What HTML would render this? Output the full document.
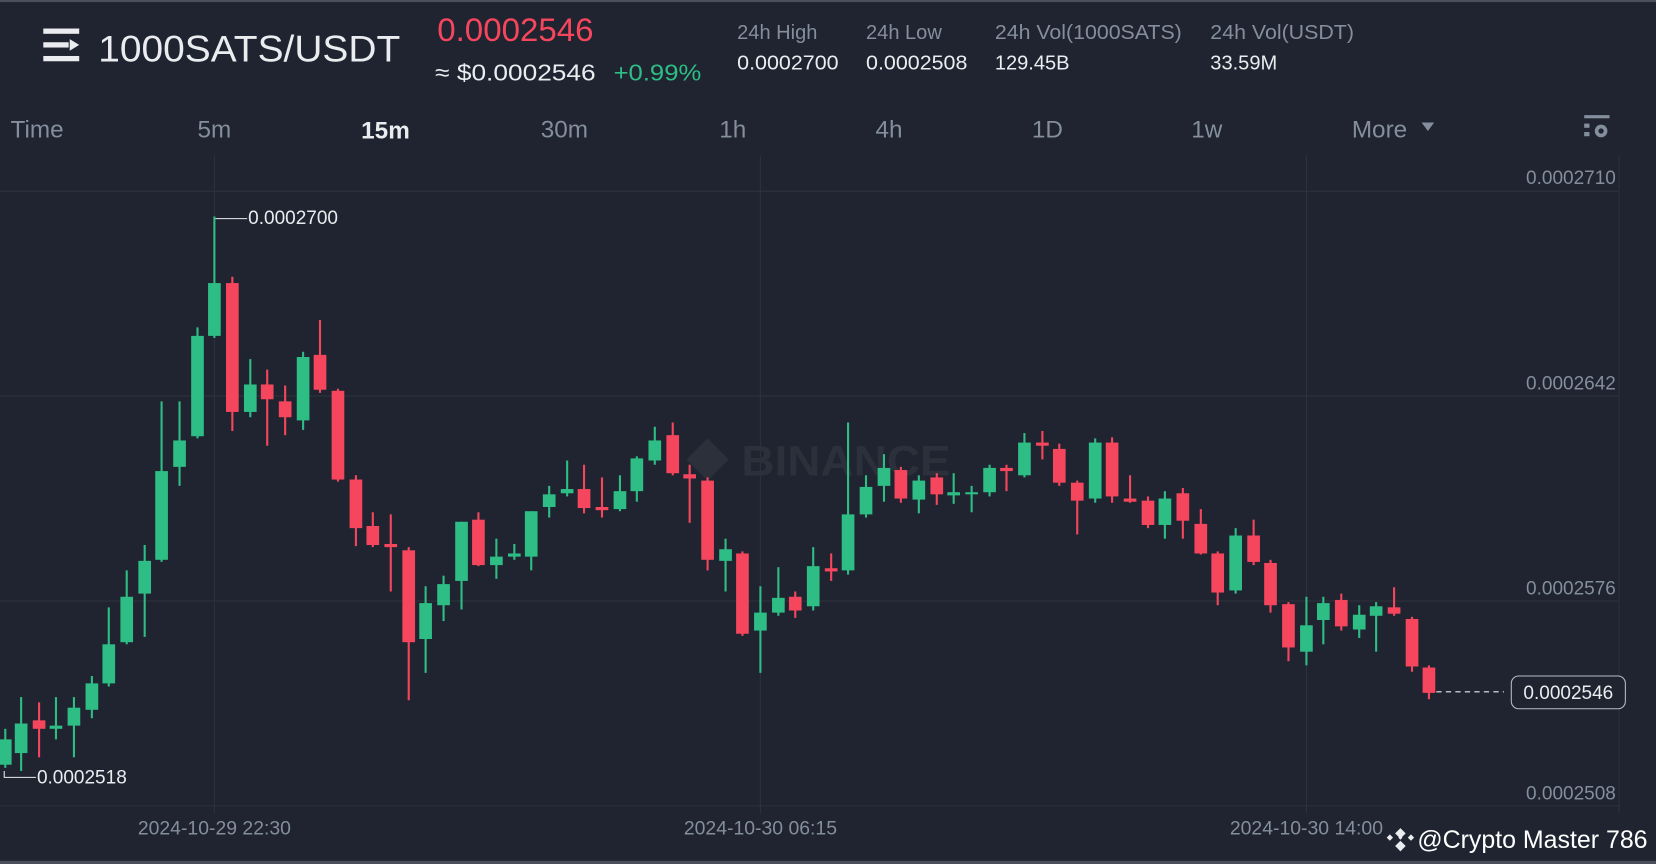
<!DOCTYPE html>
<html><head><meta charset="utf-8"><style>
html,body{margin:0;padding:0;background:#1f2430;}
svg{display:block}
text{font-family:"Liberation Sans",sans-serif}
</style></head><body>
<svg width="1656" height="864" viewBox="0 0 1568 818" preserveAspectRatio="none" xmlns="http://www.w3.org/2000/svg">
<rect width="1568" height="818" fill="#1f2430"/>
<rect width="1568" height="2" fill="#4a4f5a"/>
<rect y="815" width="1568" height="3" fill="#4a4f5a"/>
<!-- header -->
<g fill="#eaecef"><rect x="41" y="27" width="34" height="5"/><rect x="41" y="40" width="24" height="5"/><polygon points="66,37 75,42.5 66,48"/><rect x="41" y="53" width="34" height="5"/></g>
<text x="93" y="58" font-size="35" fill="#eaecef" textLength="286" lengthAdjust="spacingAndGlyphs">1000SATS/USDT</text>
<text x="414" y="39" font-size="31" fill="#f6465d" textLength="148" lengthAdjust="spacingAndGlyphs">0.0002546</text>
<text x="412" y="76" font-size="22" fill="#eaecef" textLength="152" lengthAdjust="spacingAndGlyphs">≈ $0.0002546</text>
<text x="581" y="76" font-size="22" fill="#2ebd85" textLength="83" lengthAdjust="spacingAndGlyphs">+0.99%</text>
<g font-size="19" fill="#848e9c"><text x="698" y="37">24h High</text><text x="820" y="37">24h Low</text><text x="942" y="37" textLength="177" lengthAdjust="spacingAndGlyphs">24h Vol(1000SATS)</text><text x="1146" y="37" textLength="136" lengthAdjust="spacingAndGlyphs">24h Vol(USDT)</text></g>
<g font-size="19" fill="#eaecef"><text x="698" y="66" textLength="96" lengthAdjust="spacingAndGlyphs">0.0002700</text><text x="820" y="66" textLength="96" lengthAdjust="spacingAndGlyphs">0.0002508</text><text x="942" y="66">129.45B</text><text x="1146" y="66">33.59M</text></g>
<g font-size="23" fill="#848e9c"><text x="10" y="130">Time</text><text x="187" y="130">5m</text><text x="512" y="130">30m</text><text x="681" y="130">1h</text><text x="829" y="130">4h</text><text x="977" y="130">1D</text><text x="1128" y="130">1w</text><text x="1280" y="130">More</text></g>
<text x="342" y="131" font-size="23" fill="#eaecef" font-weight="bold">15m</text>
<polygon points="1346,116 1358,116 1352,124" fill="#848e9c"/>
<g fill="#848e9c"><rect x="1500" y="109" width="24" height="3"/><rect x="1500" y="117" width="5" height="4"/><rect x="1500" y="125" width="5" height="4"/><circle cx="1516" cy="124" r="6"/><circle cx="1516" cy="124" r="2.5" fill="#1f2430"/></g>
<!-- grid -->
<g stroke="#2d323d" stroke-width="1"><line x1="0" y1="181" x2="1533" y2="181"/><line x1="0" y1="375" x2="1533" y2="375"/><line x1="0" y1="569" x2="1533" y2="569"/><line x1="0" y1="763" x2="1533" y2="763"/><line x1="203" y1="147" x2="203" y2="770"/><line x1="720" y1="147" x2="720" y2="770"/><line x1="1237" y1="147" x2="1237" y2="770"/><line x1="1533" y1="147" x2="1533" y2="770"/></g>
<!-- watermark -->
<g fill="#2b303b"><polygon points="670,415 690,435 670,455 650,435"/><text x="702" y="450" font-size="40" font-weight="bold" fill="#2b303b" textLength="198" lengthAdjust="spacingAndGlyphs">BINANCE</text></g>
<!-- axis labels -->
<g font-size="18" fill="#848e9c"><text x="1530" y="174" text-anchor="end">0.0002710</text><text x="1530" y="369" text-anchor="end">0.0002642</text><text x="1530" y="563" text-anchor="end">0.0002576</text><text x="1530" y="757" text-anchor="end">0.0002508</text>
<text x="203" y="790" text-anchor="middle" textLength="145" lengthAdjust="spacingAndGlyphs">2024-10-29 22:30</text><text x="720" y="790" text-anchor="middle" textLength="145" lengthAdjust="spacingAndGlyphs">2024-10-30 06:15</text><text x="1237" y="790" text-anchor="middle" textLength="145" lengthAdjust="spacingAndGlyphs">2024-10-30 14:00</text></g>
<!-- hi/lo markers -->
<g stroke="#eaecef" stroke-width="1" fill="none"><polyline points="203,212 203,207 234,207"/><polyline points="4,730 4,736 34,736"/></g>
<text x="235" y="212" font-size="18" fill="#eaecef">0.0002700</text>
<text x="35" y="742" font-size="18" fill="#eaecef">0.0002518</text>
<line x1="1360" y1="655" x2="1424" y2="655" stroke="#eaecef" stroke-dasharray="5,4"/>
<rect x="1431" y="640" width="108" height="31" rx="7" fill="#1f2430" stroke="#b7bdc6"/>
<text x="1485" y="662" font-size="18" fill="#eaecef" text-anchor="middle">0.0002546</text>
<!-- signature -->
<g fill="#eaecef"><polygon points="1326,784 1331,789 1326,794 1321,789"/><polygon points="1326,796 1331,801 1326,806 1321,801"/><polygon points="1316,790 1319,793 1316,796 1313,793"/><polygon points="1336,790 1339,793 1336,796 1333,793"/><polygon points="1326,791 1328,793 1326,795 1324,793"/></g>
<text x="1342" y="803" font-size="24" fill="#ffffff" textLength="218" lengthAdjust="spacingAndGlyphs">@Crypto Master 786</text>
<!-- green candles -->
<g fill="#2ebd85" stroke="#2ebd85" stroke-width="2">
<line x1="5" y1="690" x2="5" y2="727"/><rect x="-1" y="700" width="12" height="24" stroke="none"/>
<line x1="20" y1="660" x2="20" y2="730"/><rect x="14" y="685" width="12" height="28" stroke="none"/>
<line x1="53" y1="660" x2="53" y2="700"/><rect x="47" y="687" width="12" height="3" stroke="none"/>
<line x1="70" y1="660" x2="70" y2="717"/><rect x="64" y="670" width="12" height="17" stroke="none"/>
<line x1="87" y1="640" x2="87" y2="680"/><rect x="81" y="647" width="12" height="25" stroke="none"/>
<line x1="103" y1="575" x2="103" y2="650"/><rect x="97" y="610" width="12" height="37" stroke="none"/>
<line x1="120" y1="540" x2="120" y2="610"/><rect x="114" y="565" width="12" height="43" stroke="none"/>
<line x1="137" y1="516" x2="137" y2="603"/><rect x="131" y="531" width="12" height="31" stroke="none"/>
<line x1="153" y1="380" x2="153" y2="532"/><rect x="147" y="446" width="12" height="84" stroke="none"/>
<line x1="170" y1="380" x2="170" y2="460"/><rect x="164" y="417" width="12" height="25" stroke="none"/>
<line x1="187" y1="310" x2="187" y2="415"/><rect x="181" y="318" width="12" height="95" stroke="none"/>
<line x1="203" y1="205" x2="203" y2="320"/><rect x="197" y="268" width="12" height="50" stroke="none"/>
<line x1="237" y1="340" x2="237" y2="395"/><rect x="231" y="364" width="12" height="26" stroke="none"/>
<line x1="287" y1="333" x2="287" y2="407"/><rect x="281" y="338" width="12" height="60" stroke="none"/>
<line x1="403" y1="555" x2="403" y2="637"/><rect x="397" y="571" width="12" height="34" stroke="none"/>
<line x1="420" y1="545" x2="420" y2="588"/><rect x="414" y="553" width="12" height="20" stroke="none"/>
<line x1="437" y1="494" x2="437" y2="577"/><rect x="431" y="494" width="12" height="56" stroke="none"/>
<line x1="470" y1="510" x2="470" y2="548"/><rect x="464" y="527" width="12" height="8" stroke="none"/>
<line x1="487" y1="515" x2="487" y2="530"/><rect x="481" y="524" width="12" height="3" stroke="none"/>
<line x1="503" y1="484" x2="503" y2="540"/><rect x="497" y="484" width="12" height="43" stroke="none"/>
<line x1="520" y1="460" x2="520" y2="490"/><rect x="514" y="468" width="12" height="12" stroke="none"/>
<line x1="537" y1="436" x2="537" y2="470"/><rect x="531" y="463" width="12" height="4" stroke="none"/>
<line x1="587" y1="450" x2="587" y2="484"/><rect x="581" y="465" width="12" height="17" stroke="none"/>
<line x1="603" y1="432" x2="603" y2="475"/><rect x="597" y="434" width="12" height="31" stroke="none"/>
<line x1="620" y1="404" x2="620" y2="440"/><rect x="614" y="417" width="12" height="19" stroke="none"/>
<line x1="687" y1="510" x2="687" y2="560"/><rect x="681" y="520" width="12" height="11" stroke="none"/>
<line x1="720" y1="555" x2="720" y2="637"/><rect x="714" y="580" width="12" height="17" stroke="none"/>
<line x1="737" y1="537" x2="737" y2="583"/><rect x="731" y="566" width="12" height="14" stroke="none"/>
<line x1="770" y1="518" x2="770" y2="578"/><rect x="764" y="536" width="12" height="38" stroke="none"/>
<line x1="803" y1="400" x2="803" y2="544"/><rect x="797" y="487" width="12" height="53" stroke="none"/>
<line x1="820" y1="450" x2="820" y2="490"/><rect x="814" y="461" width="12" height="26" stroke="none"/>
<line x1="837" y1="430" x2="837" y2="475"/><rect x="831" y="443" width="12" height="17" stroke="none"/>
<line x1="870" y1="450" x2="870" y2="486"/><rect x="864" y="455" width="12" height="18" stroke="none"/>
<line x1="903" y1="448" x2="903" y2="477"/><rect x="897" y="466" width="12" height="3" stroke="none"/>
<line x1="920" y1="460" x2="920" y2="485"/><rect x="914" y="466" width="12" height="2" stroke="none"/>
<line x1="937" y1="440" x2="937" y2="470"/><rect x="931" y="443" width="12" height="23" stroke="none"/>
<line x1="970" y1="410" x2="970" y2="452"/><rect x="964" y="419" width="12" height="31" stroke="none"/>
<line x1="1037" y1="415" x2="1037" y2="476"/><rect x="1031" y="419" width="12" height="53" stroke="none"/>
<line x1="1103" y1="465" x2="1103" y2="510"/><rect x="1097" y="472" width="12" height="25" stroke="none"/>
<line x1="1170" y1="500" x2="1170" y2="562"/><rect x="1164" y="507" width="12" height="52" stroke="none"/>
<line x1="1237" y1="565" x2="1237" y2="630"/><rect x="1231" y="592" width="12" height="25" stroke="none"/>
<line x1="1253" y1="565" x2="1253" y2="610"/><rect x="1247" y="571" width="12" height="16" stroke="none"/>
<line x1="1287" y1="573" x2="1287" y2="604"/><rect x="1281" y="582" width="12" height="14" stroke="none"/>
<line x1="1303" y1="570" x2="1303" y2="617"/><rect x="1297" y="574" width="12" height="9" stroke="none"/>
</g>
<!-- red candles -->
<g fill="#f6465d" stroke="#f6465d" stroke-width="2">
<line x1="37" y1="665" x2="37" y2="717"/><rect x="31" y="682" width="12" height="8" stroke="none"/>
<line x1="220" y1="262" x2="220" y2="408"/><rect x="214" y="268" width="12" height="122" stroke="none"/>
<line x1="253" y1="350" x2="253" y2="422"/><rect x="247" y="364" width="12" height="14" stroke="none"/>
<line x1="270" y1="365" x2="270" y2="412"/><rect x="264" y="380" width="12" height="15" stroke="none"/>
<line x1="303" y1="303" x2="303" y2="372"/><rect x="297" y="336" width="12" height="33" stroke="none"/>
<line x1="320" y1="368" x2="320" y2="456"/><rect x="314" y="370" width="12" height="84" stroke="none"/>
<line x1="337" y1="450" x2="337" y2="517"/><rect x="331" y="454" width="12" height="46" stroke="none"/>
<line x1="353" y1="485" x2="353" y2="518"/><rect x="347" y="498" width="12" height="18" stroke="none"/>
<line x1="370" y1="487" x2="370" y2="560"/><rect x="364" y="515" width="12" height="3" stroke="none"/>
<line x1="387" y1="518" x2="387" y2="663"/><rect x="381" y="521" width="12" height="87" stroke="none"/>
<line x1="453" y1="485" x2="453" y2="536"/><rect x="447" y="492" width="12" height="43" stroke="none"/>
<line x1="553" y1="440" x2="553" y2="486"/><rect x="547" y="463" width="12" height="18" stroke="none"/>
<line x1="570" y1="452" x2="570" y2="490"/><rect x="564" y="480" width="12" height="3" stroke="none"/>
<line x1="637" y1="400" x2="637" y2="450"/><rect x="631" y="412" width="12" height="36" stroke="none"/>
<line x1="653" y1="440" x2="653" y2="495"/><rect x="647" y="449" width="12" height="4" stroke="none"/>
<line x1="670" y1="452" x2="670" y2="540"/><rect x="664" y="455" width="12" height="75" stroke="none"/>
<line x1="703" y1="522" x2="703" y2="602"/><rect x="697" y="524" width="12" height="76" stroke="none"/>
<line x1="753" y1="560" x2="753" y2="585"/><rect x="747" y="565" width="12" height="13" stroke="none"/>
<line x1="787" y1="524" x2="787" y2="550"/><rect x="781" y="538" width="12" height="3" stroke="none"/>
<line x1="853" y1="442" x2="853" y2="476"/><rect x="847" y="445" width="12" height="27" stroke="none"/>
<line x1="887" y1="448" x2="887" y2="478"/><rect x="881" y="452" width="12" height="16" stroke="none"/>
<line x1="953" y1="440" x2="953" y2="465"/><rect x="947" y="443" width="12" height="3" stroke="none"/>
<line x1="987" y1="408" x2="987" y2="435"/><rect x="981" y="419" width="12" height="3" stroke="none"/>
<line x1="1003" y1="420" x2="1003" y2="460"/><rect x="997" y="425" width="12" height="32" stroke="none"/>
<line x1="1020" y1="455" x2="1020" y2="506"/><rect x="1014" y="457" width="12" height="17" stroke="none"/>
<line x1="1053" y1="414" x2="1053" y2="476"/><rect x="1047" y="419" width="12" height="51" stroke="none"/>
<line x1="1070" y1="450" x2="1070" y2="476"/><rect x="1064" y="472" width="12" height="3" stroke="none"/>
<line x1="1087" y1="470" x2="1087" y2="500"/><rect x="1081" y="474" width="12" height="23" stroke="none"/>
<line x1="1120" y1="462" x2="1120" y2="510"/><rect x="1114" y="467" width="12" height="26" stroke="none"/>
<line x1="1137" y1="482" x2="1137" y2="525"/><rect x="1131" y="496" width="12" height="28" stroke="none"/>
<line x1="1153" y1="522" x2="1153" y2="573"/><rect x="1147" y="524" width="12" height="37" stroke="none"/>
<line x1="1187" y1="492" x2="1187" y2="535"/><rect x="1181" y="507" width="12" height="25" stroke="none"/>
<line x1="1203" y1="530" x2="1203" y2="580"/><rect x="1197" y="533" width="12" height="40" stroke="none"/>
<line x1="1220" y1="570" x2="1220" y2="626"/><rect x="1214" y="572" width="12" height="41" stroke="none"/>
<line x1="1270" y1="562" x2="1270" y2="597"/><rect x="1264" y="568" width="12" height="25" stroke="none"/>
<line x1="1320" y1="556" x2="1320" y2="583"/><rect x="1314" y="575" width="12" height="6" stroke="none"/>
<line x1="1337" y1="584" x2="1337" y2="636"/><rect x="1331" y="586" width="12" height="45" stroke="none"/>
<line x1="1353" y1="630" x2="1353" y2="662"/><rect x="1347" y="632" width="12" height="24" stroke="none"/>
</g>
</svg>
</body></html>
